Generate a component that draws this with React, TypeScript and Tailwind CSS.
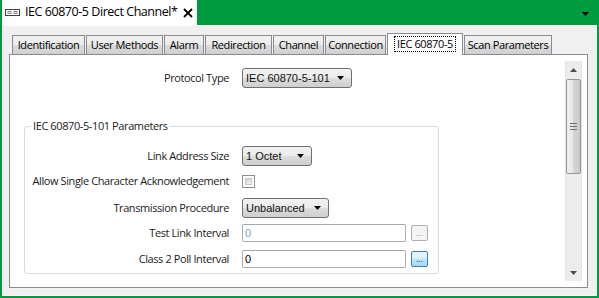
import React from 'react'

const comboBg =
  'bg-[linear-gradient(#f2f2f2_0%,#ebebeb_50%,#dddddd_50%,#cfcfcf_100%)]'

function DownArrow({ color = '#000' }: { color?: string }) {
  return (
    <svg width="7" height="4" viewBox="0 0 7 4">
      <path d="M0 0H7L3.5 4Z" fill={color} />
    </svg>
  )
}

function Combo({ text, className }: { text: string; className: string }) {
  return (
    <div
      className={`h-[20px] border border-[#707070] rounded-[3px] ${comboBg} flex items-center justify-between pl-[3px] pr-[7px] font-['Liberation_Sans',sans-serif] text-[11px] tracking-normal text-[#111] ${className}`}
    >
      <span>{text}</span>
      <DownArrow />
    </div>
  )
}

function TextRow({ value, enabled }: { value: string; enabled: boolean }) {
  return (
    <div className="flex items-center">
      <div
        className={`w-[164px] h-[18px] bg-white border border-[#abadb3] border-t-[#a2a6b0] rounded-[2px] flex items-center pl-[2px] font-['Liberation_Sans',sans-serif] text-[11px] tracking-normal ${
          enabled ? 'text-black' : 'text-[#7f9db9]'
        }`}
      >
        {value}
      </div>
      {enabled ? (
        <div className="ml-[5px] w-[17px] h-[16px] rounded-[2px] border border-[#3c7fb1] bg-[linear-gradient(#eaf6fd_0%,#d9f0fc_50%,#bee6fd_50%,#a7d9f5_100%)] flex items-end justify-center pb-[3px] text-[9px] leading-none tracking-normal text-[#1b3a6b]">
          ...
        </div>
      ) : (
        <div className="ml-[5px] w-[17px] h-[16px] rounded-[2px] border border-[#adb2b5] bg-[#f4f4f4] flex items-end justify-center pb-[3px] text-[9px] leading-none tracking-normal text-[#a0a0a0]">
          ...
        </div>
      )}
    </div>
  )
}

const tabs = [
  { name: 'Identification', w: 'w-[73px]' },
  { name: 'User Methods', w: 'w-[77px]' },
  { name: 'Alarm', w: 'w-[40px]' },
  { name: 'Redirection', w: 'w-[67px]' },
  { name: 'Channel', w: 'w-[51px]' },
  { name: 'Connection', w: 'w-[61px]' },
  { name: 'IEC 60870-5', w: 'w-[76px]', active: true },
  { name: 'Scan Parameters', w: 'w-[88px]' },
]

export default function App() {
  return (
    <div className="w-[599px] h-[298px] bg-[#019a3e] flex flex-col px-[2px] pb-[2px] overflow-hidden whitespace-nowrap font-['Open_Sans',sans-serif] text-[11px] tracking-[-0.4px] text-[#1a1a1a]">
      {/* document tab */}
      <div className="h-[25px] flex shrink-0">
        <div className="w-[195px] bg-white flex items-center pl-[3px]">
          <svg width="15" height="7" viewBox="0 0 15 7" className="mr-[5px] shrink-0">
            <rect x="0.5" y="0.5" width="14" height="6" fill="none" stroke="#444" />
            <rect x="3" y="2.5" width="3" height="2" fill="none" stroke="#777" strokeWidth="0.8" />
            <rect x="9" y="2.5" width="3" height="2" fill="none" stroke="#777" strokeWidth="0.8" />
          </svg>
          <span className="w-[153px] text-[12.5px] tracking-[-0.45px] text-black">IEC 60870-5 Direct Channel*</span>
          <svg width="10" height="10" viewBox="0 0 10 10" className="ml-[5px] shrink-0">
            <path d="M1 1L9 9M9 1L1 9" stroke="#000" strokeWidth="1.8" />
          </svg>
        </div>
        <div className="flex-1 flex items-end justify-end pb-[9px] pr-[8px]">
          <DownArrow />
        </div>
      </div>

      {/* document body */}
      <div className="flex-1 bg-[#f0f0f0] border border-white flex flex-col pt-[7px] pl-[6px] pr-[8px] pb-[7px]">
        <div className="flex items-end h-[22px] -mb-px pl-[3px] gap-[1px] relative z-10">
          {tabs.map((t) =>
            t.active ? (
              <div
                key={t.name}
                className={`${t.w} h-[22px] bg-white border border-b-0 border-[#898c95] flex items-center justify-center text-black pb-[2px]`}
              >
                <span className="border border-dotted border-black px-[2px] leading-[14px]">
                  {t.name}
                </span>
              </div>
            ) : (
              <div
                key={t.name}
                className={`${t.w} h-[19px] mb-px border border-b-0 border-[#898c95] ${comboBg} flex items-center justify-center text-black`}
              >
                {t.name}
              </div>
            )
          )}
        </div>

        <div className="flex-1 bg-white border border-[#898c95] flex">
          <div className="flex-1 flex flex-col">
            <div className="mt-[13px] flex items-center h-[20px] gap-[13px]">
              <div className="w-[219px] text-right">Protocol Type</div>
              <Combo text="IEC 60870-5-101" className="w-[110px]" />
            </div>

            <fieldset className="mt-[30px] ml-[14px] w-[415px] border border-[#d5dfe5] rounded-[3px] p-0 pb-[5px]">
              <legend className="ml-[6px] px-[2px] leading-[16px]">IEC 60870-5-101 Parameters</legend>

              <div className="mt-[12px] flex items-center h-[20px] gap-[13px]">
                <div className="w-[204px] text-right">Link Address Size</div>
                <Combo text="1 Octet" className="w-[70px]" />
              </div>

              <div className="mt-[9px] flex items-center h-[13px] gap-[13px]">
                <div className="w-[204px] text-right">Allow Single Character Acknowledgement</div>
                <div className="w-[13px] h-[13px] border border-[#8f8f8f] bg-white p-[2px]">
                  <div className="w-full h-full bg-[linear-gradient(135deg,#cbcfd5,#f7f7f7)] border border-[#c6c6c6]" />
                </div>
              </div>

              <div className="mt-[10px] flex items-center h-[20px] gap-[13px]">
                <div className="w-[204px] text-right">Transmission Procedure</div>
                <Combo text="Unbalanced" className="w-[87px]" />
              </div>

              <div className="mt-[6px] flex items-center h-[18px] gap-[13px]">
                <div className="w-[204px] text-right">Test Link Interval</div>
                <TextRow value="0" enabled={false} />
              </div>

              <div className="mt-[8px] flex items-center h-[18px] gap-[13px]">
                <div className="w-[204px] text-right">Class 2 Poll Interval</div>
                <TextRow value="0" enabled />
              </div>
            </fieldset>
          </div>

          {/* scrollbar */}
          <div className="w-[17px] my-[6px] mr-[5px] bg-[#ececec] border-x border-[#e3e3e3] flex flex-col">
            <div className="h-[17px] flex items-center justify-center">
              <svg width="7" height="4" viewBox="0 0 7 4">
                <path d="M0 4H7L3.5 0Z" fill="#4d4d4d" />
              </svg>
            </div>
            <div className="h-[95px] mt-px rounded-[2px] border border-[#959595] bg-[linear-gradient(90deg,#f1f1f1_0%,#e6e6e6_50%,#d6d6d6_50%,#c9c9c9_100%)] flex flex-col items-center justify-center gap-[2px]">
              <div className="w-[7px] h-px bg-[#6f6f6f]" />
              <div className="w-[7px] h-px bg-[#6f6f6f]" />
              <div className="w-[7px] h-px bg-[#6f6f6f]" />
            </div>
            <div className="flex-1" />
            <div className="h-[17px] flex items-center justify-center">
              <DownArrow color="#4d4d4d" />
            </div>
          </div>
        </div>
      </div>
    </div>
  )
}
